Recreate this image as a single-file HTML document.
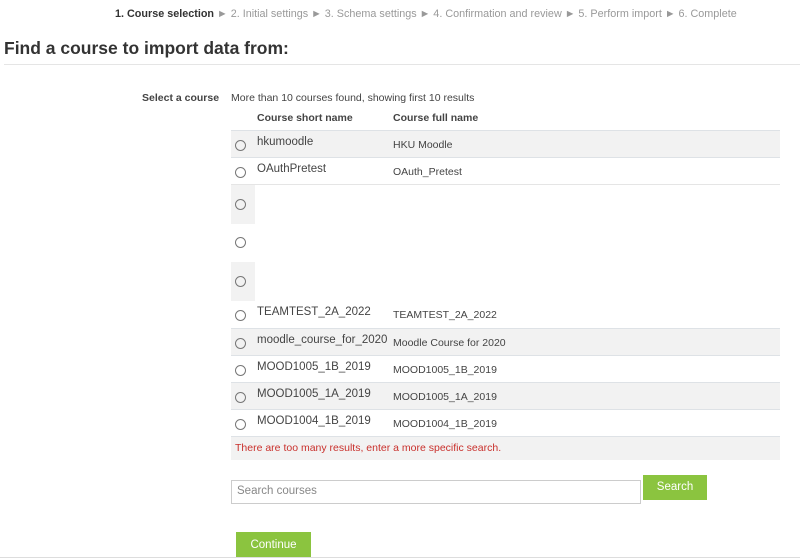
<!DOCTYPE html>
<html><head><style>
body{margin:0;width:800px;height:558px;background:#fff;font-family:"Liberation Sans",sans-serif;color:#373a3c;position:relative;overflow:hidden}
.a{position:absolute;white-space:nowrap}
.steps{top:8px;left:115px;font-size:10.8px;color:#999}
.steps b{color:#333}
h2{position:absolute;top:38px;left:4px;margin:0;font-size:17.5px;font-weight:bold;color:#333}
.hr{position:absolute;top:64px;left:4px;width:796px;height:1px;background:#e5e5e5}
.row{position:absolute;left:231px;width:549px;border-top:1px solid #dee2e6}
.g{background:#f2f2f2}
.r{position:absolute;left:4px;width:9px;height:9px;border:1px solid #777;border-radius:50%}
.s{position:absolute;left:26px;font-size:11.5px;color:#444}
.f{position:absolute;left:162px;font-size:10.5px;color:#444}
</style></head><body>
<div class="a steps"><b>1. Course selection</b> ► 2. Initial settings ► 3. Schema settings ► 4. Confirmation and review ► 5. Perform import ► 6. Complete</div>
<h2>Find a course to import data from:</h2>
<div class="hr"></div>
<div class="a" style="top:92px;left:142px;font-size:10.5px;font-weight:bold;color:#444">Select a course</div>
<div class="a" style="top:92px;left:231px;font-size:10.5px;color:#444">More than 10 courses found, showing first 10 results</div>
<div class="a" style="top:112px;left:257px;font-size:10.5px;font-weight:bold;color:#444">Course short name</div>
<div class="a" style="top:112px;left:393px;font-size:10.5px;font-weight:bold;color:#444">Course full name</div>

<div class="row g" style="top:130px;height:27px"><div class="r" style="top:9px"></div><div class="s" style="top:5px">hkumoodle</div><div class="f" style="top:8px">HKU Moodle</div></div>
<div class="row" style="top:157px;height:27px"><div class="r" style="top:9px"></div><div class="s" style="top:5px">OAuthPretest</div><div class="f" style="top:8px">OAuth_Pretest</div></div>
<div class="row" style="top:184px;height:39px;border-top-color:#e5e5e5"><div style="position:absolute;left:0;top:0;width:24px;height:39px;background:#f2f2f2"></div><div class="r" style="top:14px"></div></div>
<div class="row" style="top:223px;height:39px;border:0"><div class="r" style="top:14px"></div></div>
<div class="row" style="top:262px;height:39px;border:0"><div style="position:absolute;left:0;top:0;width:24px;height:39px;background:#f2f2f2"></div><div class="r" style="top:14px"></div></div>
<div class="row" style="top:301px;height:27px;border:0"><div class="r" style="top:9px"></div><div class="s" style="top:5px">TEAMTEST_2A_2022</div><div class="f" style="top:8px">TEAMTEST_2A_2022</div></div>
<div class="row g" style="top:328px;height:27px"><div class="r" style="top:9px"></div><div class="s" style="top:5px">moodle_course_for_2020</div><div class="f" style="top:8px">Moodle Course for 2020</div></div>
<div class="row" style="top:355px;height:27px"><div class="r" style="top:9px"></div><div class="s" style="top:5px">MOOD1005_1B_2019</div><div class="f" style="top:8px">MOOD1005_1B_2019</div></div>
<div class="row g" style="top:382px;height:27px"><div class="r" style="top:9px"></div><div class="s" style="top:5px">MOOD1005_1A_2019</div><div class="f" style="top:8px">MOOD1005_1A_2019</div></div>
<div class="row" style="top:409px;height:27px"><div class="r" style="top:9px"></div><div class="s" style="top:5px">MOOD1004_1B_2019</div><div class="f" style="top:8px">MOOD1004_1B_2019</div></div>
<div class="row g" style="top:436px;height:23px"><div class="a" style="left:4px;top:5px;font-size:10.5px;color:#c9302c">There are too many results, enter a more specific search.</div></div>

<div class="a" style="top:480px;left:231px;width:408px;height:22px;border:1px solid #ccc"><span class="a" style="left:5px;top:4px;font-size:11.5px;color:#888">Search courses</span></div>
<div class="a" style="top:475px;left:643px;width:64px;height:25px;background:#8bc43f;color:#fff;font-size:11.5px;text-align:center;line-height:25px">Search</div>
<div class="a" style="top:532px;left:236px;width:75px;height:26px;background:#8bc43f;color:#fff;font-size:11.5px;text-align:center;line-height:26px">Continue</div>
<div class="a" style="top:557px;left:0;width:800px;height:1px;background:#ddd"></div>
</body></html>
